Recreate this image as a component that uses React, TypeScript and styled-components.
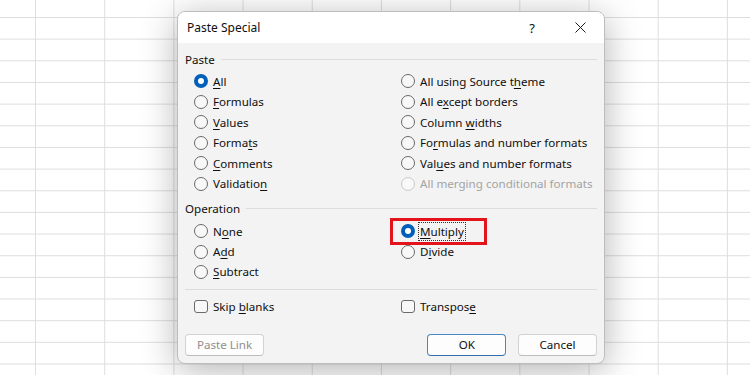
import React from "react";
import styled, { createGlobalStyle, css } from "styled-components";

const GlobalStyle = createGlobalStyle`
  html, body { margin: 0; padding: 0; }
  body {
    width: 750px;
    height: 375px;
    overflow: hidden;
    font-family: "Noto Sans", "Open Sans", sans-serif;
    color: #0f0f0f;
    background-color: #fff;
    background-image:
      linear-gradient(to bottom, #dedede 1px, transparent 1px),
      linear-gradient(to right, #dedede 1px, transparent 1px);
    background-size: 100% 21.67px, 69.2px 100%;
    background-position: 0 17px, 35px 0;
  }
`;

const Page = styled.div`
  padding: 11px 0 0 177px;
`;

const Dialog = styled.div`
  width: 428px;
  box-sizing: border-box;
  border: 1px solid #bdbdbd;
  border-radius: 8px;
  background: #f3f3f3;
  overflow: hidden;
  box-shadow: 0 6px 36px rgba(0, 0, 0, 0.3);
`;

const TitleBar = styled.div`
  height: 31px;
  display: flex;
  align-items: center;
  padding: 0 18px 0 9px;
  background: #fff;
`;

const Title = styled.span`
  font-size: 12px;
  flex: 1;
`;

const Help = styled.span`
  width: 20px;
  text-align: center;
  font-size: 13px;
  margin-right: 33px;
`;

const Body = styled.div`
  padding: 8px 7px 7px 7px;
`;

const SectionHeader = styled.div<{ $mt?: number }>`
  display: flex;
  align-items: center;
  gap: 6px;
  height: 16px;
  font-size: 11.6px;
  margin-top: ${(p) => p.$mt ?? 0}px;
  &::after {
    content: "";
    flex: 1;
    height: 1px;
    background: #dcdcdc;
  }
`;

const OptionGrid = styled.div<{ $mt: number; $row: number; $rows: number }>`
  display: grid;
  grid-template-columns: 207px 1fr;
  grid-auto-flow: column;
  grid-template-rows: ${(p) => `repeat(${p.$rows}, ${p.$row}px)`};
  padding-left: 9px;
  margin-top: ${(p) => p.$mt}px;
`;

const Option = styled.div<{ $disabled?: boolean }>`
  position: relative;
  display: flex;
  align-items: center;
  gap: 5px;
  font-size: 11.6px;
  white-space: nowrap;
  color: ${(p) => (p.$disabled ? "#a3a3a3" : "#0f0f0f")};
`;

const Radio = styled.span<{ $checked?: boolean; $disabled?: boolean }>`
  position: relative;
  width: 14px;
  height: 14px;
  box-sizing: border-box;
  border-radius: 50%;
  border: 1px solid ${(p) => (p.$disabled ? "#c9c9c9" : "#6a6a6a")};
  background: #f8f8f8;
  flex-shrink: 0;
  ${(p) =>
    p.$checked &&
    css`
      border: none;
      background: #005fb8;
      &::after {
        content: "";
        position: absolute;
        left: 4px;
        top: 4px;
        width: 6px;
        height: 6px;
        border-radius: 50%;
        background: #fff;
      }
    `}
`;

const Check = styled.span`
  width: 14px;
  height: 13px;
  box-sizing: border-box;
  border-radius: 3px;
  border: 1px solid #6a6a6a;
  background: #f8f8f8;
  flex-shrink: 0;
`;

const Label = styled.span<{ $focused?: boolean }>`
  line-height: 15px;
  ${(p) =>
    p.$focused &&
    css`
      outline: 1px dotted #333;
      outline-offset: 1px;
    `}
  u {
    text-underline-offset: 2px;
  }
`;

const Highlight = styled.span`
  position: absolute;
  left: -11px;
  top: -3px;
  width: 97px;
  height: 27px;
  box-sizing: border-box;
  border: 3px solid #e3141c;
  pointer-events: none;
`;

const Separator = styled.div`
  height: 1px;
  background: #dcdcdc;
  margin-top: 7px;
`;

const CheckRow = styled.div`
  display: grid;
  grid-template-columns: 207px 1fr;
  height: 20.4px;
  padding-left: 9px;
  margin-top: 6px;
`;

const Buttons = styled.div`
  display: flex;
  gap: 11.6px;
  margin-top: 17px;
`;

const Button = styled.button<{ $primary?: boolean; $spaceAfter?: boolean }>`
  width: 79px;
  height: 22px;
  box-sizing: border-box;
  padding: 0;
  font-family: inherit;
  font-size: 11.6px;
  color: ${(p) => (p.disabled ? "#8f8f8f" : "#0f0f0f")};
  background: #fdfdfd;
  border: 1px solid ${(p) => (p.$primary ? "#4a86c2" : "#d2d2d2")};
  border-bottom-color: ${(p) => (p.$primary ? "#2f6fb0" : "#bdbdbd")};
  border-radius: 4px;
  margin-right: ${(p) => (p.$spaceAfter ? "auto" : "0")};
`;

type Opt = { text: React.ReactNode; checked?: boolean; disabled?: boolean; focused?: boolean; marked?: boolean };

const key = (before: string, k: string, after: string) => (
  <>
    {before}
    <u>{k}</u>
    {after}
  </>
);

const pasteOpts: Opt[] = [
  { text: key("", "A", "ll"), checked: true },
  { text: key("", "F", "ormulas") },
  { text: key("", "V", "alues") },
  { text: key("Forma", "t", "s") },
  { text: key("", "C", "omments") },
  { text: key("Validatio", "n", "") },
  { text: key("All using Source t", "h", "eme") },
  { text: key("All e", "x", "cept borders") },
  { text: key("Column ", "w", "idths") },
  { text: key("Fo", "r", "mulas and number formats") },
  { text: key("Val", "u", "es and number formats") },
  { text: "All merging conditional formats", disabled: true },
];

const opOpts: Opt[] = [
  { text: key("N", "o", "ne") },
  { text: key("A", "d", "d") },
  { text: key("", "S", "ubtract") },
  { text: key("", "M", "ultiply"), checked: true, focused: true, marked: true },
  { text: key("D", "i", "vide") },
];

const OptionItem: React.FC<{ o: Opt }> = ({ o }) => (
  <Option $disabled={o.disabled}>
    <Radio $checked={o.checked} $disabled={o.disabled} />
    <Label $focused={o.focused}>{o.text}</Label>
    {o.marked && <Highlight />}
  </Option>
);

const CloseIcon = () => (
  <svg width="11" height="11" viewBox="0 0 11 11">
    <path d="M0.5 0.5 L10.5 10.5 M10.5 0.5 L0.5 10.5" stroke="#1b1b1b" strokeWidth="1" fill="none" />
  </svg>
);

export default function App() {
  return (
    <>
      <GlobalStyle />
      <Page>
        <Dialog>
          <TitleBar>
            <Title>Paste Special</Title>
            <Help>?</Help>
            <CloseIcon />
          </TitleBar>
          <Body>
            <SectionHeader>Paste</SectionHeader>
            <OptionGrid $mt={4} $row={20.5} $rows={6}>
              {pasteOpts.map((o, i) => (
                <OptionItem key={i} o={o} />
              ))}
            </OptionGrid>
            <SectionHeader $mt={6}>Operation</SectionHeader>
            <OptionGrid $mt={5} $row={20.4} $rows={3}>
              {opOpts.map((o, i) => (
                <OptionItem key={i} o={o} />
              ))}
            </OptionGrid>
            <Separator />
            <CheckRow>
              <Option>
                <Check />
                <Label>{key("Skip ", "b", "lanks")}</Label>
              </Option>
              <Option>
                <Check />
                <Label>{key("Transpos", "e", "")}</Label>
              </Option>
            </CheckRow>
            <Buttons>
              <Button disabled $spaceAfter>
                Paste Link
              </Button>
              <Button $primary>OK</Button>
              <Button>Cancel</Button>
            </Buttons>
          </Body>
        </Dialog>
      </Page>
    </>
  );
}
